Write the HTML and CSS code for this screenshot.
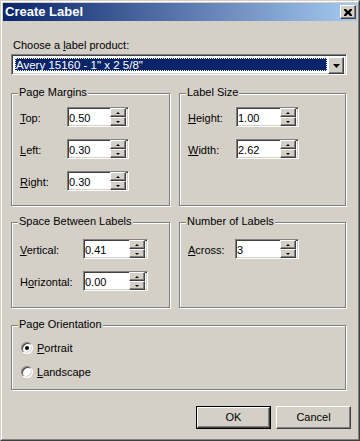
FILE: index.html
```html
<!DOCTYPE html>
<html>
<head>
<meta charset="utf-8">
<link rel="stylesheet" href="styles.css">
</head>
<body>
<div class="window">
  <div class="frame">
    <div class="titlebar">
      <span class="title">Create Label</span>
      <div class="close raised">
        <svg width="8" height="7" viewBox="0 0 8 7"><path d="M0 0h2l2 2 2-2h2v1L6 3.5 8 6v1H6L4 5 2 7H0V6l2-2.5L0 1z" fill="#000"/></svg>
      </div>
    </div>
    <div class="content">
      <div class="prod-label">Choose a <u>l</u>abel product:</div>
      <div class="combo sunken">
        <div class="combo-value"><span class="sel">Avery 15160 - 1" x 2 5/8"</span></div>
        <div class="combo-btn raised">
          <svg width="7" height="4" viewBox="0 0 7 4"><path d="M0 0h7L3.5 4z" fill="#000"/></svg>
        </div>
      </div>

      <div class="grid">
        <div class="group g1">
          <span class="legend">Page Margins</span>
          <div class="row"><span class="lbl w47"><u>T</u>op:</span><div class="spin sunken s62"><span class="val">0.50</span><div class="arrows"><div class="ab raised"><i class="up"></i></div><div class="ab raised"><i class="dn"></i></div></div></div></div>
          <div class="row"><span class="lbl w47"><u>L</u>eft:</span><div class="spin sunken s62"><span class="val">0.30</span><div class="arrows"><div class="ab raised"><i class="up"></i></div><div class="ab raised"><i class="dn"></i></div></div></div></div>
          <div class="row"><span class="lbl w47"><u>R</u>ight:</span><div class="spin sunken s62"><span class="val">0.30</span><div class="arrows"><div class="ab raised"><i class="up"></i></div><div class="ab raised"><i class="dn"></i></div></div></div></div>
        </div>
        <div class="group g1">
          <span class="legend">Label Size</span>
          <div class="row"><span class="lbl w48"><u>H</u>eight:</span><div class="spin sunken s63"><span class="val">1.00</span><div class="arrows"><div class="ab raised"><i class="up"></i></div><div class="ab raised"><i class="dn"></i></div></div></div></div>
          <div class="row"><span class="lbl w48"><u>W</u>idth:</span><div class="spin sunken s63"><span class="val">2.62</span><div class="arrows"><div class="ab raised"><i class="up"></i></div><div class="ab raised"><i class="dn"></i></div></div></div></div>
        </div>
        <div class="group g2">
          <span class="legend">Space Between Labels</span>
          <div class="row"><span class="lbl w63"><u>V</u>ertical:</span><div class="spin sunken s65"><span class="val">0.41</span><div class="arrows"><div class="ab raised"><i class="up"></i></div><div class="ab raised"><i class="dn"></i></div></div></div></div>
          <div class="row"><span class="lbl w63">H<u>o</u>rizontal:</span><div class="spin sunken s65"><span class="val">0.00</span><div class="arrows"><div class="ab raised"><i class="up"></i></div><div class="ab raised"><i class="dn"></i></div></div></div></div>
        </div>
        <div class="group g2">
          <span class="legend">Number of Labels</span>
          <div class="row"><span class="lbl w47"><u>A</u>cross:</span><div class="spin sunken s64"><span class="val">3</span><div class="arrows"><div class="ab raised"><i class="up"></i></div><div class="ab raised"><i class="dn"></i></div></div></div></div>
        </div>
      </div>

      <div class="group orient">
        <span class="legend">Page Orientation</span>
        <div class="radio-row"><span class="radio checked"></span><span><u>P</u>ortrait</span></div>
        <div class="radio-row"><span class="radio"></span><span><u>L</u>andscape</span></div>
      </div>

      <div class="buttons">
        <div class="btn default"><div class="btn-in raised">OK</div></div>
        <div class="btn"><div class="btn-in raised">Cancel</div></div>
      </div>
    </div>
  </div>
</div>
</body>
</html>
```

FILE: styles.css
```css
* { box-sizing: border-box; }
html, body { margin: 0; padding: 0; background: #d4d0c8; }
body {
  font-family: "Liberation Sans", Arial, sans-serif;
  font-size: 11px;
  line-height: 13px;
  color: #000;
}
u { text-decoration: underline; text-underline-offset: 1px; }

.window {
  width: 360px;
  height: 441px;
  background: #d4d0c8;
  border: 1px solid;
  border-color: #d4d0c8 #404040 #404040 #d4d0c8;
}
.frame {
  height: 100%;
  border: 1px solid;
  border-color: #fff #808080 #808080 #fff;
  padding: 1px;
}

.raised {
  background: #d4d0c8;
  border: 1px solid;
  border-color: #fff #404040 #404040 #fff;
  box-shadow: inset -1px -1px 0 #808080, inset 1px 1px 0 #d4d0c8;
}
.sunken {
  background: #fff;
  border: 1px solid;
  border-color: #808080 #fff #fff #808080;
  box-shadow: inset 1px 1px 0 #404040, inset -1px -1px 0 #d4d0c8;
}

.titlebar {
  height: 18px;
  background: linear-gradient(to right, #0a246a, #a6caf0);
  display: flex;
  align-items: center;
  justify-content: space-between;
  padding: 0 1px 0 2px;
}
.title {
  color: #fff;
  font-weight: bold;
  font-size: 13px;
  line-height: 16px;
}
.close {
  width: 16px;
  height: 14px;
  display: flex;
  align-items: center;
  justify-content: center;
}

.content {
  padding: 18px 10px 0 8px;
}
.prod-label { padding-left: 2px; }
.combo {
  margin-top: 2px;
  height: 21px;
  display: flex;
  padding: 2px;
}
.combo-value {
  flex: 1;
  padding: 1px;
}
.sel {
  display: block;
  height: 100%;
  background: #0a246a;
  color: #fff;
  border: 1px dotted #fff;
  line-height: 13px;
  font-size: 11.5px;
}
.combo-btn {
  width: 16px;
  height: 17px;
  display: flex;
  align-items: center;
  justify-content: center;
}

.grid {
  display: grid;
  grid-template-columns: 160px 1fr;
  column-gap: 8px;
  row-gap: 15px;
  margin-top: 18px;
}
.group {
  position: relative;
  border: 1px solid #808080;
  box-shadow: 1px 1px 0 #fff, inset 1px 1px 0 #fff;
  margin-right: 1px;
  margin-bottom: 1px;
}
.legend {
  position: absolute;
  top: -8px;
  left: 6px;
  padding: 0 1px;
  background: #d4d0c8;
  line-height: 13px;
}
.g1 { padding: 13px 8px 14px 8px; display: flex; flex-direction: column; gap: 12px; }
.g2 { padding: 16px 8px 16px 8px; display: flex; flex-direction: column; gap: 12px; }

.row { display: flex; align-items: center; }
.lbl { padding-top: 2px; }
.w47 { width: 47px; }
.w48 { width: 48px; }
.w63 { width: 63px; }
.spin {
  height: 20px;
  display: flex;
  padding: 2px;
}
.s62 { width: 62px; }
.s63 { width: 63px; }
.s64 { width: 64px; }
.s65 { width: 65px; }
.val {
  flex: 1;
  line-height: 16px;
  margin-left: -1px;
}
.arrows {
  width: 16px;
  display: flex;
  flex-direction: column;
  margin: -2px 0 -2px 0;
}
.ab {
  flex: 1;
  display: flex;
  align-items: center;
  justify-content: center;
}
.up, .dn {
  width: 0; height: 0;
  border-left: 2px solid transparent;
  border-right: 2px solid transparent;
}
.up { border-bottom: 2px solid #000; }
.dn { border-top: 2px solid #000; }

.orient {
  margin-top: 16px;
  padding: 16px 8px 11px 9px;
  display: flex;
  flex-direction: column;
  gap: 12px;
}
.radio-row { display: flex; align-items: center; gap: 4px; height: 12px; }
.radio {
  width: 12px;
  height: 12px;
  border-radius: 50%;
  background: #fff;
  border: 1px solid;
  border-color: #808080 #fff #fff #808080;
  box-shadow: inset 1px 1px 0 #404040, inset -1px -1px 0 #d4d0c8;
  position: relative;
}
.radio.checked::after {
  content: "";
  position: absolute;
  left: 3px; top: 3px;
  width: 4px; height: 4px;
  border-radius: 50%;
  background: #000;
}

.buttons {
  display: flex;
  justify-content: flex-end;
  gap: 5px;
  margin-top: 16px;
  margin-right: -4px;
}
.btn {
  width: 75px;
  height: 23px;
  border: 1px solid transparent;
}
.btn.default { border-color: #000; }
.btn:not(.default) .btn-in { margin: -1px; height: 23px; }
.btn-in {
  height: 100%;
  display: flex;
  align-items: center;
  justify-content: center;
}
```
